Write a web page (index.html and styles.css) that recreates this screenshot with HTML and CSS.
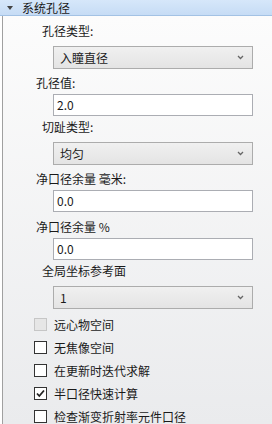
FILE: index.html
```html
<!DOCTYPE html>
<html>
<head>
  <title>系统孔径</title>
  <link rel="stylesheet" href="styles.css">
</head>
<body>
  <div class="header">
    <span class="tri"></span>
    <span class="title">系统孔径</span>
  </div>

  <div class="panel">
    <div class="field">
      <label class="combo-label">孔径类型:</label>
      <div class="select">
        <span>入瞳直径</span>
        <svg class="chev" width="7" height="5" viewBox="0 0 7 5"><path d="M1 1 L3.5 3.5 L6 1" fill="none" stroke="#666" stroke-width="1.3"/></svg>
      </div>
    </div>

    <div class="field">
      <label class="text-label">孔径值:</label>
      <div class="input">2.0</div>
    </div>

    <div class="field">
      <label class="combo-label">切趾类型:</label>
      <div class="select">
        <span>均匀</span>
        <svg class="chev" width="7" height="5" viewBox="0 0 7 5"><path d="M1 1 L3.5 3.5 L6 1" fill="none" stroke="#666" stroke-width="1.3"/></svg>
      </div>
    </div>

    <div class="field">
      <label class="text-label">净口径余量 毫米:</label>
      <div class="input">0.0</div>
    </div>

    <div class="field">
      <label class="text-label">净口径余量 %</label>
      <div class="input">0.0</div>
    </div>

    <div class="field">
      <label class="combo-label">全局坐标参考面</label>
      <div class="select">
        <span>1</span>
        <svg class="chev" width="7" height="5" viewBox="0 0 7 5"><path d="M1 1 L3.5 3.5 L6 1" fill="none" stroke="#666" stroke-width="1.3"/></svg>
      </div>
    </div>

    <div class="checks">
      <div class="check-row disabled"><span class="box"></span>远心物空间</div>
      <div class="check-row"><span class="box"></span>无焦像空间</div>
      <div class="check-row"><span class="box"></span>在更新时迭代求解</div>
      <div class="check-row">
        <span class="box">
          <svg width="11" height="11" viewBox="0 0 11 11"><path d="M2 5.5 L4.3 8 L9 2.5" fill="none" stroke="#222" stroke-width="1.8"/></svg>
        </span>半口径快速计算
      </div>
      <div class="check-row"><span class="box"></span>检查渐变折射率元件口径</div>
    </div>
  </div>
</body>
</html>
```

FILE: styles.css
```css
body {
  margin: 0;
  width: 272px;
  height: 424px;
  overflow: hidden;
  background: #ffffff;
  font-family: "Noto Sans CJK SC", "Microsoft YaHei", sans-serif;
  font-size: 12px;
  color: #1a1a1a;
}

.header {
  height: 15px;
  display: flex;
  align-items: center;
  background: linear-gradient(#d6e7fa, #c6dcf5);
  border-bottom: 1px solid #a3c2e4;
}

.tri {
  width: 0;
  height: 0;
  margin-left: 7px;
  margin-right: 9px;
  border-left: 3px solid transparent;
  border-right: 3px solid transparent;
  border-top: 4px solid #444444;
}

.title {
  line-height: 15px;
}

.panel {
  margin-left: 2px;
  height: 408px;
  border-left: 1px solid #a0a0a0;
  background: linear-gradient(#fcfcfc, #eaebed);
  padding-top: 9px;
  box-sizing: border-box;
}

.field {
  height: 48px;
  display: flex;
  flex-direction: column;
  padding-left: 50px;
}

label {
  line-height: 16px;
  margin-bottom: 5px;
}

/* 文本框的标签靠左一些，下拉框的标签缩进更多 */
.text-label {
  margin-left: -17px;
  position: relative;
  top: 2px;
}

.combo-label {
  margin-left: -11px;
  position: relative;
  top: -2px;
}

.select {
  width: 200px;
  height: 23px;
  box-sizing: border-box;
  border: 1px solid #acacac;
  background: linear-gradient(#f0f0f0, #e4e4e4);
  display: flex;
  align-items: center;
  justify-content: space-between;
  padding-left: 6px;
  padding-right: 8px;
}

.input {
  width: 200px;
  height: 22px;
  box-sizing: border-box;
  border: 1px solid #abadb3;
  background: #ffffff;
  padding-left: 3px;
  line-height: 20px;
}

.checks {
  padding-left: 31px;
}

.check-row {
  height: 23px;
  display: flex;
  align-items: center;
}

.box {
  width: 13px;
  height: 13px;
  box-sizing: border-box;
  border: 1px solid #333333;
  background: #ffffff;
  margin-right: 7px;
  display: flex;
  align-items: center;
  justify-content: center;
}

.disabled .box {
  border-color: #c6c6c6;
  background: #e6e6e6;
}
```
